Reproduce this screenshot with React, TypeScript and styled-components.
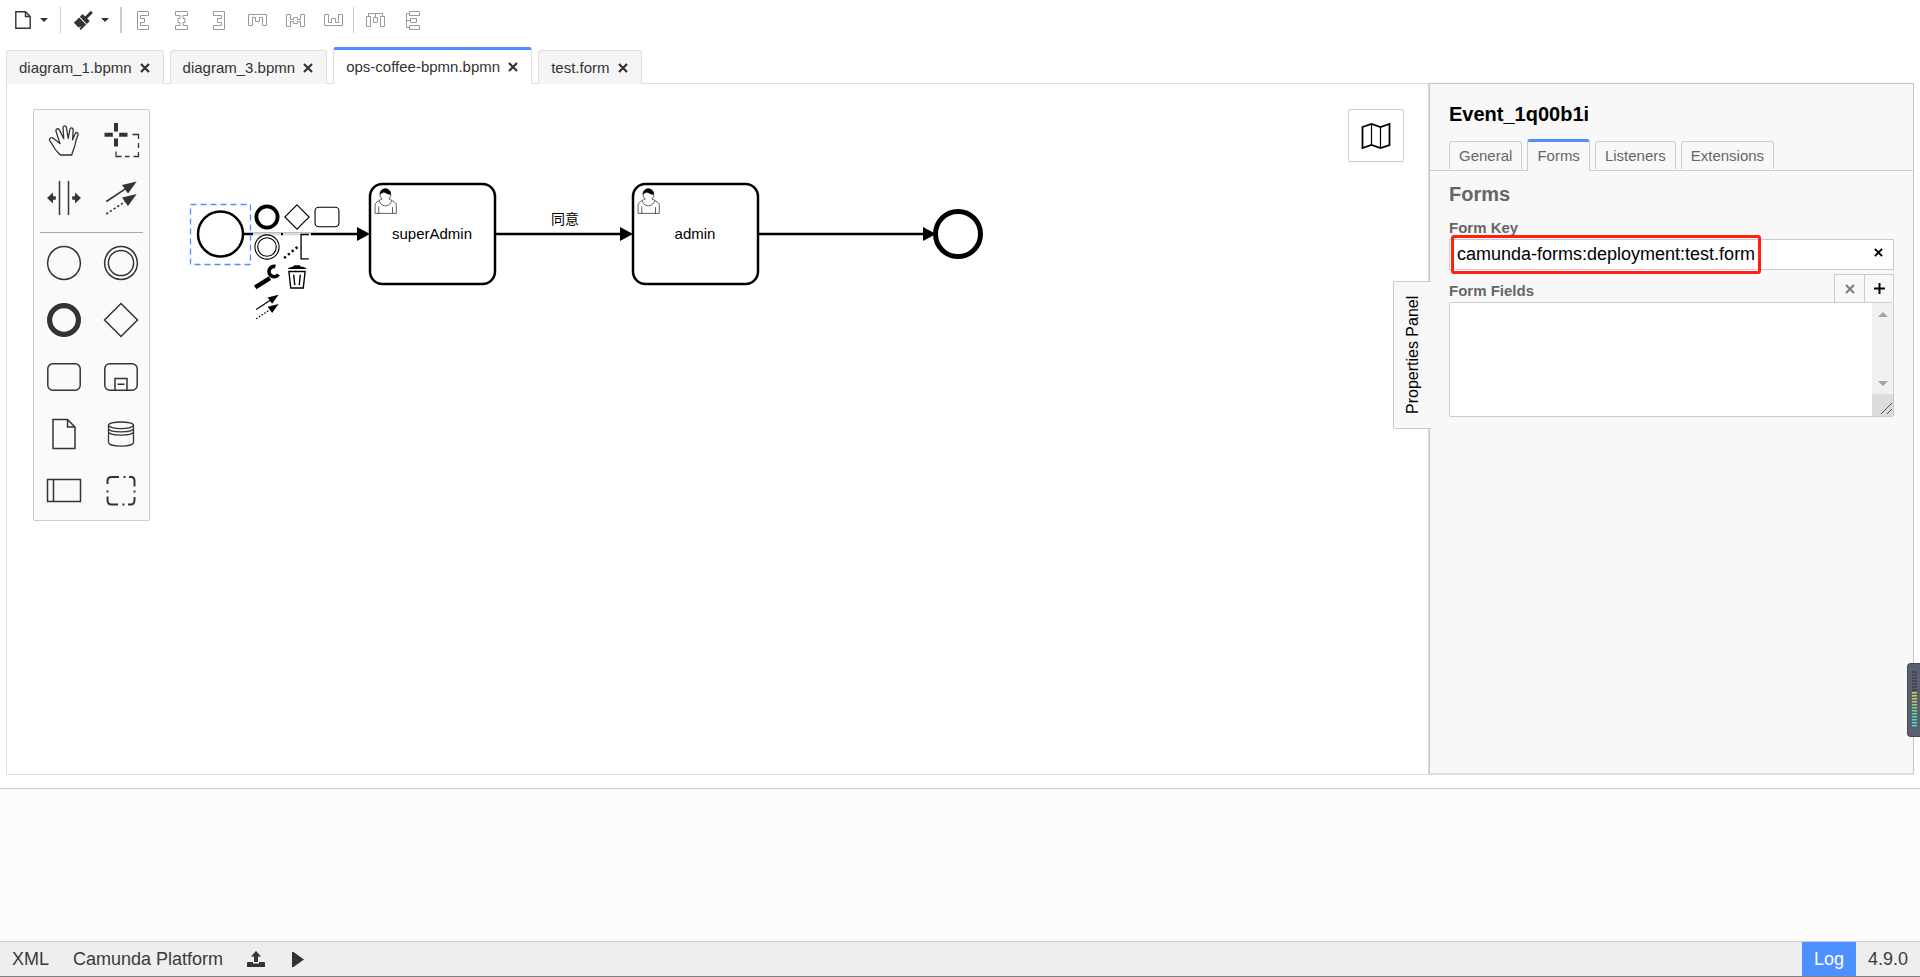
import React from "react";
import styled, { createGlobalStyle } from "styled-components";

const Global = createGlobalStyle`
  * { box-sizing: border-box; }
  body { margin: 0; background: #fff; color: #333; font-family: "Liberation Sans", Arial, sans-serif; font-size: 15px; }
  button, input, select { font: inherit; color: inherit; margin: 0; padding: 0; border: 0; background: none; outline: none; }
  svg { display: block; overflow: visible; }
`;

const Shell = styled.div`
  min-height: 100vh;
  display: flex;
  flex-direction: column;
`;

/* ---------- toolbar ---------- */
const Toolbar = styled.header`
  height: 47px;
  display: flex;
  align-items: center;
  padding: 0 0 7px 3px;
`;
const MenuButton = styled.button`
  width: 56px;
  height: 26px;
  display: flex;
  align-items: center;
  justify-content: center;
  gap: 9px;
`;
const AlignButton = styled.button`
  width: 38px;
  height: 26px;
  display: flex;
  align-items: center;
  justify-content: center;
`;
const Divider = styled.span<{ $wide?: boolean }>`
  width: ${(p) => (p.$wide ? 2 : 1)}px;
  height: 26px;
  margin: 0 2px 0 1px;
  background: #ccc;
`;
const Caret = styled.span`
  border: 4px solid transparent;
  border-top-color: #333;
  border-bottom: 0;
`;

/* ---------- file tabs ---------- */
const Tabs = styled.nav`
  height: 37px;
  margin: 0 6px;
  display: flex;
  align-items: flex-end;
  gap: 6px;
  box-shadow: inset 0 -1px #ddd;
`;
const Tab = styled.div<{ $active?: boolean }>`
  height: ${(p) => (p.$active ? 37 : 34)}px;
  display: flex;
  align-items: center;
  gap: 8px;
  padding: 0 13px 0 12px;
  border: 1px solid #ddd;
  border-top: ${(p) => (p.$active ? "3px solid #4d90ff" : "1px solid #ddd")};
  border-bottom: 0;
  border-radius: 3px 3px 0 0;
  background: ${(p) => (p.$active ? "#fff" : "#f5f5f5")};
`;
const TabLabel = styled.button`
  line-height: 18px;
`;
const IconButton = styled.button`
  display: flex;
  align-items: center;
  justify-content: center;
`;

/* ---------- editor ---------- */
const Editor = styled.main`
  flex: 1;
  min-height: 500px;
  margin: 0 6px 13px;
  display: flex;
  border: 1px solid #ddd;
  border-top: 0;
`;
const Canvas = styled.section`
  flex: 1;
  min-width: 0;
  position: relative;
  overflow: hidden;
`;
const Palette = styled.div`
  position: absolute;
  left: 26px;
  top: 25px;
  width: 117px;
  padding-top: 2px;
  border: 1px solid #ccc;
  border-radius: 2px;
  background: #fafafa;
  color: #333;
`;
const ToolGroup = styled.div<{ $height: number }>`
  height: ${(p) => p.$height}px;
  padding-left: 1px;
  display: grid;
  grid-template-columns: 1fr 1fr;
  grid-auto-rows: 1fr;
  place-items: center;
`;
const Rule = styled.hr`
  margin: 6px 6px 1px;
  border: 0;
  border-top: 1px solid #aaa;
`;
const MapToggle = styled.button`
  position: absolute;
  right: 25px;
  top: 25px;
  width: 56px;
  height: 53px;
  display: flex;
  align-items: center;
  justify-content: center;
  border: 1px solid #ccc;
  border-radius: 2px;
  background: #fff;
  color: #000;
`;
const ContextPad = styled.div`
  position: absolute;
  left: 246px;
  top: 119px;
  display: grid;
  grid-template-columns: repeat(3, 28px);
  grid-auto-rows: 28px;
  gap: 2px;
  color: #000;
`;
const PadButton = styled.button<{ $col: number; $row: number }>`
  grid-column: ${(p) => p.$col};
  grid-row: ${(p) => p.$row};
  display: flex;
  align-items: center;
  justify-content: center;
  background: rgba(255, 255, 255, 0.85);
`;
const Diagram = styled.svg`
  font-family: "Liberation Sans", "Noto Sans CJK SC", sans-serif;
  font-size: 15px;
`;

/* ---------- properties ---------- */
const Properties = styled.aside`
  width: 485px;
  margin: -1px -1px 0 0;
  position: relative;
  border: 1px solid #c6c6c6;
  border-bottom-color: #ddd;
  background: #f8f8f8;
  box-shadow: -1px 0 1px #ddd;
  color: #666;
`;
const PanelToggle = styled.button`
  position: absolute;
  left: -37px;
  top: 197px;
  width: 38px;
  height: 148px;
  display: flex;
  align-items: center;
  justify-content: center;
  writing-mode: vertical-rl;
  transform: rotate(180deg);
  border: 1px solid #ccc;
  border-left: 0;
  border-radius: 0 2px 2px 0;
  background: #f8f8f8;
  color: #000;
  font-size: 16px;
  line-height: 20px;
`;
const ElementName = styled.h1`
  margin: 18px 19px 0;
  font-size: 20px;
  line-height: 24px;
  color: #000;
`;
const PanelTabs = styled.div`
  height: 45px;
  padding: 0 19px;
  display: flex;
  align-items: flex-end;
  gap: 5px;
  box-shadow: inset 0 -1px #ccc;
`;
const PanelTab = styled.button<{ $active?: boolean }>`
  height: ${(p) => (p.$active ? 32 : 28)}px;
  margin-bottom: ${(p) => (p.$active ? 0 : 2)}px;
  padding: ${(p) => (p.$active ? "0 9px 3px" : "0 9px")};
  border: 1px solid #ccc;
  border-top: ${(p) => (p.$active ? "3px solid #4d90ff" : "1px solid #ccc")};
  border-bottom: 0;
  border-radius: 3px 3px 0 0;
  background: #f8f8f8;
`;
const PanelBody = styled.div`
  padding: 11px 19px;
`;
const GroupTitle = styled.h2`
  margin: 0 0 13px;
  font-size: 20px;
  line-height: 24px;
`;
const FieldLabel = styled.label`
  display: block;
  margin-bottom: 2px;
  font-weight: bold;
  line-height: 18px;
`;
const KeyBox = styled.div`
  height: 31px;
  position: relative;
  display: flex;
  align-items: stretch;
  border: 1px solid #ccc;
  background: #fff;
  color: #000;
`;
const KeyInput = styled.input`
  flex: 1;
  min-width: 0;
  padding: 0 8px 0 7px;
  font-size: 18px;
`;
const ClearButton = styled(IconButton)`
  width: 29px;
  padding-bottom: 4px;
`;
const Highlight = styled.span`
  position: absolute;
  left: 1px;
  top: -5px;
  width: 310px;
  height: 39px;
  border: 3px solid #ff2010;
  border-radius: 3px;
  pointer-events: none;
`;
const FieldsHeader = styled.div`
  height: 32px;
  display: flex;
  align-items: flex-end;
  justify-content: space-between;
`;
const FieldsActions = styled.div`
  display: flex;
  border: 1px solid #ccc;
  border-bottom: 0;
`;
const SmallButton = styled(IconButton)<{ $muted?: boolean }>`
  width: 29px;
  height: 27px;
  color: ${(p) => (p.$muted ? "#808080" : "#000")};
  & + & { border-left: 1px solid #ccc; }
`;
const ListBox = styled.div`
  height: 115px;
  display: flex;
  border: 1px solid #ccc;
  border-radius: 2px;
  background: #fff;
`;
const FieldList = styled.select`
  flex: 1;
  min-width: 0;
  overflow: hidden;
`;
const Rail = styled.div`
  width: 21px;
  display: flex;
  flex-direction: column;
  align-items: center;
  justify-content: space-between;
  background: #f1f1f1;
`;
const RailArrow = styled.span<{ $down?: boolean }>`
  margin: ${(p) => (p.$down ? "auto 0 8px" : "9px 0 0")};
  border: 5px solid transparent;
  ${(p) => (p.$down ? "border-top-color: #a3a3a3; border-bottom: 0;" : "border-bottom-color: #a3a3a3; border-top: 0;")}
`;
const Grip = styled.span`
  width: 21px;
  height: 22px;
  padding: 9px 0 0 9px;
  background: #dcdcdc;
`;

/* ---------- log + status ---------- */
const Log = styled.section`
  height: 153px;
  border-top: 1px solid #ccc;
  background: #fcfcfc;
`;
const StatusBar = styled.footer`
  height: 36px;
  display: flex;
  align-items: stretch;
  border-top: 1px solid #ccc;
  border-bottom: 1px solid #808080;
  background: #eee;
  font-size: 18px;
`;
const StatusButton = styled.button<{ $active?: boolean }>`
  padding: 0 12px;
  display: flex;
  align-items: center;
  background: ${(p) => (p.$active ? "#4d90ff" : "transparent")};
  color: ${(p) => (p.$active ? "#fff" : "#3a3a3a")};
`;
const StatusLeft = styled.div`
  flex: 1;
  display: flex;
`;
const Meter = styled.div`
  position: fixed;
  right: 0;
  top: 663px;
  width: 13px;
  height: 74px;
  padding: 7px 3px 0 4px;
  display: flex;
  flex-direction: column;
  gap: 1px;
  border-radius: 4px 0 0 4px;
  border: 1px solid #454a57;
  border-right: 0;
  background: #5a6070;
`;
const MeterBar = styled.i`
  height: 2px;
  flex: none;
  border-bottom: 1px solid rgba(60, 70, 70, 0.35);
`;

/* ---------- icons, drawn on a 38 unit grid ---------- */
const shapes: Record<string, React.ReactNode> = {
  hand: (
    <path d="M15.3 33H26.7C27.6 29 29.8 25.500 30.300 21.500C30.800 18.500 32 15.500 33 12.800C33.300 10.500 31.200 9.700 30.300 11.600L27.600 17.800L28.200 8C28.200 5.500 25.500 5.300 24.900 7.500L23.200 16.300L21.400 5.500C20.800 3 17.800 3.500 18.100 6L18.700 16.700L14.400 7.900C13 5.800 10.300 7 11 9.200L15 21.600L8.200 16.300C6 14.700 3.500 16.700 4.700 18.700C6.500 21 8.200 24 10 27C11.500 29.500 14 31 15.300 33Z" strokeWidth="1.3" strokeLinejoin="round" />
  ),
  lasso: (
    <g>
      <path d="M14 1V9.500M14 16.500V24.500M2.500 12.700H10.800M17.200 12.700H25.500" strokeWidth="4" />
      <path d="M30.500 12.500H36.500V17M36.500 21V26M36.500 30V34.500H31.500M27.500 34.500H23M19.500 34.500H14V29.500" strokeWidth="1.300" />
    </g>
  ),
  space: (
    <g>
      <path d="M14.500 2V36M23.500 2V36" strokeWidth="1.500" />
      <path d="M2 19L8 13.500V17.200H10.800V20.800H8V24.500ZM36 19L30 13.500V17.200H27.200V20.800H30V24.500Z" fill="currentColor" stroke="none" />
    </g>
  ),
  connect: (
    <g>
      <path d="M4.300 22.500L26 8.200" strokeWidth="1.600" />
      <path d="M4.300 35L26 20.700" strokeWidth="1.600" strokeDasharray="2.200 2.200" />
      <path d="M34.700 2.500L20 6L26 14.500ZM34.700 15L20 18.500L26 27Z" fill="currentColor" stroke="none" />
    </g>
  ),
  start: <circle cx="19" cy="19" r="16.400" strokeWidth="1.500" />,
  intermediate: (
    <g strokeWidth="1.500">
      <circle cx="19" cy="19" r="16.400" />
      <circle cx="19" cy="19" r="12.600" />
    </g>
  ),
  end: <circle cx="19" cy="19" r="14.400" strokeWidth="5.200" />,
  gateway: <path d="M19 2.500L35.500 19L19 35.500L2.500 19Z" strokeWidth="1.500" />,
  task: <rect x="2.800" y="5.800" width="32.400" height="26.400" rx="5" strokeWidth="1.500" />,
  subprocess: (
    <g strokeWidth="1.500">
      <rect x="2.800" y="5.800" width="32.400" height="26.400" rx="5" />
      <path d="M13 32V20.500H25V32M15.500 26.300H22.500" />
    </g>
  ),
  data: <path d="M8 4.500H22.500L30 12V33.500H8ZM22.500 4.500V12H30" strokeWidth="1.500" />,
  store: (
    <g strokeWidth="1.300">
      <ellipse cx="19" cy="10.300" rx="12.500" ry="3.300" />
      <path d="M6.500 10.300V27.500C6.500 32.200 31.500 32.200 31.500 27.500V10.300M6.500 13.500C6.500 18 31.500 18 31.500 13.500M6.500 16.800C6.500 21.300 31.500 21.300 31.500 16.800" />
    </g>
  ),
  participant: <path d="M2.500 7.500H35.500V29.500H2.500ZM8.500 7.500V29.500" strokeWidth="1.500" />,
  group: (
    <path d="M5.500 12V9Q5.500 5 9.500 5H17M21.500 5H23.500M27 5H29Q32.500 5 32.500 9V14.500M32.500 18.500V20.500M32.500 25V28Q32.500 32.500 28.500 32.500H26M22.500 32.500H20.500M16 32.500H9.500Q5.500 32.500 5.500 28V24.500M5.500 20.500V18.500" strokeWidth="2" />
  ),
  annotation: (
    <g>
      <path d="M35 2H24.500V35H35" strokeWidth="1.800" />
      <path d="M1.500 34L22 17" strokeWidth="3.400" strokeDasharray="3 3.800" />
    </g>
  ),
  wrench: (
    <g>
      <path d="M3 33L23 20.500" strokeWidth="6" />
      <path d="M34.500 15.500A7 7 0 1 1 30.500 4.800" strokeWidth="5" />
    </g>
  ),
  trash: (
    <g>
      <path d="M6 8C9 5.500 12 5 13.500 5L15.500 3H22.500L24.500 5C27 5 30 5.500 32 8Z" fill="currentColor" stroke="none" />
      <path d="M8 11.500H30L27.500 34H10.500ZM14.500 16L16 30M23.500 16L22 30" strokeWidth="1.900" />
    </g>
  ),
};

function Shape({ name, size = 38 }: { name: string; size?: number }) {
  return (
    <svg width={size} height={size} viewBox="0 0 38 38" fill="none" stroke="currentColor" aria-hidden="true">
      {shapes[name]}
    </svg>
  );
}

function Tool({ name }: { name: string }) {
  return (
    <IconButton aria-label={name}>
      <Shape name={name} />
    </IconButton>
  );
}

const Cross = ({ size = 10 }: { size?: number }) => (
  <svg width={size} height={size} viewBox="0 0 10 10" stroke="currentColor" strokeWidth="2.200" aria-hidden="true">
    <path d="M1 1L9 9M9 1L1 9" />
  </svg>
);

const alignIcons: [string, number, number, string][] = [
  ["Align left", 12, 19, "M.5.5H11.500V4.500H3.500V7.500H7.500V11.500H3.500V14.500H11.500V18.500H.5Z"],
  ["Align center", 13, 19, "M.5.5H12.500V4.500H8V7.500H10V11.500H8V14.500H12.500V18.500H.5V14.500H5V11.500H3V7.500H5V4.500H.5Z"],
  ["Align right", 12, 19, "M11.500.5H.5V4.500H8.500V7.500H4.500V11.500H8.500V14.500H.5V18.500H11.500Z"],
  ["Align top", 19, 12, "M.5.5H18.500V11.500H14.500V3.500H11.500V7.500H7.500V3.500H4.500V11.500H.5Z"],
  ["Align middle", 19, 13, "M.5.5H4.500V5.500H7.500V3.500H11.500V5.500H14.500V.5H18.500V12.500H14.500V7.500H11.500V9.500H7.500V7.500H4.500V12.500H.5Z"],
  ["Align bottom", 19, 12, "M.5.5H4.500V8.500H7.500V4.500H11.500V8.500H14.500V.5H18.500V11.500H.5Z"],
  ["Distribute horizontally", 19, 14, "M.5 13.500V3.500H4.500V13.500ZM14.500 13.500V3.500H18.500V13.500ZM7.500 4.500H11.500V9.500H7.500ZM2.500 3.500V.5H16.500V3.500M9.500 .5V4.500"],
  ["Distribute vertically", 14, 19, "M3.500.5H13.500V4.500H3.500ZM3.500 14.500H13.500V18.500H3.500ZM4.500 7.500H10.500V11.500H4.500ZM3.500 2.500H.5V16.500H3.500M.5 9.500H4.500"],
];

function AlignTool({ index }: { index: number }) {
  const [label, w, h, d] = alignIcons[index];
  return (
    <AlignButton aria-label={label}>
      <svg width={w} height={h} fill="none" stroke="#999" strokeWidth="1">
        <path d={d} />
      </svg>
    </AlignButton>
  );
}

function UserTask({ x, y, name }: { x: number; y: number; name: string }) {
  return (
    <g transform={`translate(${x} ${y})`}>
      <rect width="125" height="100" rx="12.500" fill="#fff" stroke="#000" strokeWidth="2.500" />
      <g transform="scale(1.25)" stroke="#000" strokeWidth=".5" fill="#fff">
        <path d="m 15,12 c 0.909,-0.845 1.594,-2.049 1.594,-3.385 0,-2.554 -1.805,-4.622 -4.357,-4.622 -2.552,0 -4.288,2.068 -4.288,4.622 0,1.348 0.974,2.562 1.896,3.405 -0.529,0.187 -5.669,2.097 -5.794,4.756 v 6.718 h 17 v -6.718 c 0,-2.298 -5.528,-4.595 -6.051,-4.776z m -8,6 l 0,5.500 m 11,0 l 0,-5" />
        <path d="m 15,12 m 2.162,1.009 c 0,2.447 -2.158,4.431 -4.821,4.431 -2.665,0 -4.822,-1.981 -4.822,-4.431" />
        <path d="m 15,12 m -6.900,-3.800 c 0,0 2.251,-2.358 4.274,-1.177 2.024,1.181 4.221,1.537 4.124,0.965 -0.098,-0.570 -0.117,-3.791 -4.191,-4.136 -3.572,0 -4.208,3.367 -4.207,4.348z" fill="#000" />
      </g>
      <text x="62" y="55" textAnchor="middle">{name}</text>
    </g>
  );
}

function Flow({ from, to }: { from: number; to: number }) {
  return (
    <g>
      <path d={`M${from} 150H${to - 10}`} stroke="#000" strokeWidth="2.500" />
      <path d={`M${to} 150L${to - 13} 143V157Z`} />
    </g>
  );
}

const pad: [string, number, number][] = [
  ["end", 1, 1],
  ["gateway", 2, 1],
  ["task", 3, 1],
  ["intermediate", 1, 2],
  ["annotation", 2, 2],
  ["wrench", 1, 3],
  ["trash", 2, 3],
  ["connect", 1, 4],
];

const files = ["diagram_1.bpmn", "diagram_3.bpmn", "ops-coffee-bpmn.bpmn", "test.form"];
const meterColors = [
  ...Array(7).fill("#474b57"),
  "#d8c64a", "#d3cc50", "#c3cf58", "#aed160", "#97d36e", "#85d482", "#72d498", "#62d4a8", "#56d6b6", "#50d8c0", "#4edac6", "#4edac6",
];

export default function App() {
  return (
    <Shell>
      <Global />
      <Toolbar>
        <MenuButton aria-label="New file">
          <svg width="16" height="18" fill="none" stroke="#333" strokeWidth="1.400">
            <path d="M.8.8H10.500L15.200 5.500V17.200H.8ZM10.500.8V5.500H15.200" />
          </svg>
          <Caret />
        </MenuButton>
        <Divider />
        <MenuButton aria-label="Set color">
          <svg width="18" height="18" fill="#333">
            <g transform="rotate(45 9 9)">
              <path d="M8-3H11V5H14.500V9H4.500V5H8ZM4.500 10H14.500V17.500H12.500V15.500H11.500V17.500H4.500Z" />
            </g>
          </svg>
          <Caret />
        </MenuButton>
        <Divider $wide />
        {[0, 1, 2, 3, 4, 5].map((i) => <AlignTool key={i} index={i} />)}
        <Divider />
        {[6, 7].map((i) => <AlignTool key={i} index={i} />)}
      </Toolbar>

      <Tabs>
        {files.map((f, i) => (
          <Tab key={f} $active={i === 2}>
            <TabLabel>{f}</TabLabel>
            <IconButton aria-label={`Close ${f}`}><Cross /></IconButton>
          </Tab>
        ))}
      </Tabs>

      <Editor>
        <Canvas>
          <Diagram width="1000" height="300">
            <Flow from={237} to={363} />
            <Flow from={489} to={626} />
            <Flow from={752} to={929} />
            <circle cx="213.500" cy="150" r="22.500" fill="#fff" stroke="#000" strokeWidth="2.500" />
            <rect x="183.500" y="120.500" width="60" height="60" fill="none" stroke="#4d90ff" strokeDasharray="6 4" strokeWidth="1.300" />
            <UserTask x={363} y={100} name="superAdmin" />
            <UserTask x={626} y={100} name="admin" />
            <circle cx="951" cy="150" r="22.500" fill="#fff" stroke="#000" strokeWidth="5" />
            <text x="558" y="140" fontSize="14" textAnchor="middle">同意</text>
          </Diagram>
          <ContextPad>
            {pad.map(([name, col, row]) => (
              <PadButton key={name} $col={col} $row={row} aria-label={name}>
                <Shape name={name} size={28} />
              </PadButton>
            ))}
          </ContextPad>
          <Palette>
            <ToolGroup $height={114}>
              {["hand", "lasso", "space", "connect"].map((n) => <Tool key={n} name={n} />)}
            </ToolGroup>
            <Rule />
            <ToolGroup $height={286}>
              {["start", "intermediate", "end", "gateway", "task", "subprocess", "data", "store", "participant", "group"].map((n) => (
                <Tool key={n} name={n} />
              ))}
            </ToolGroup>
          </Palette>
          <MapToggle aria-label="Toggle minimap">
            <svg width="30" height="26" fill="none" stroke="currentColor" strokeWidth="1.800">
              <path d="M1.500 4L10.500 1L19.500 4L28.500 1V22L19.500 25L10.500 22L1.500 25Z" />
              <path d="M10.500 1V22M19.500 4V25" strokeWidth="1.200" />
            </svg>
          </MapToggle>
        </Canvas>

        <Properties>
          <PanelToggle>Properties Panel</PanelToggle>
          <ElementName>Event_1q00b1i</ElementName>
          <PanelTabs>
            {["General", "Forms", "Listeners", "Extensions"].map((t) => (
              <PanelTab key={t} $active={t === "Forms"}>{t}</PanelTab>
            ))}
          </PanelTabs>
          <PanelBody>
            <GroupTitle>Forms</GroupTitle>
            <FieldLabel htmlFor="form-key">Form Key</FieldLabel>
            <KeyBox>
              <KeyInput id="form-key" defaultValue="camunda-forms:deployment:test.form" />
              <ClearButton aria-label="Clear"><Cross size={9} /></ClearButton>
              <Highlight />
            </KeyBox>
            <FieldsHeader>
              <FieldLabel htmlFor="form-fields">Form Fields</FieldLabel>
              <FieldsActions>
                <SmallButton $muted aria-label="Remove field"><Cross size={10} /></SmallButton>
                <SmallButton aria-label="Add field">
                  <svg width="11" height="11" stroke="currentColor" strokeWidth="2"><path d="M5.500 0V11M0 5.500H11" /></svg>
                </SmallButton>
              </FieldsActions>
            </FieldsHeader>
            <ListBox>
              <FieldList id="form-fields" size={5} />
              <Rail>
                <RailArrow />
                <RailArrow $down />
                <Grip>
                  <svg width="11" height="11" stroke="#555" strokeWidth="1"><path d="M0 11L11 0M6 11L11 6" /></svg>
                </Grip>
              </Rail>
            </ListBox>
          </PanelBody>
        </Properties>
      </Editor>

      <Log aria-label="Log" />
      <StatusBar>
        <StatusLeft>
          <StatusButton>XML</StatusButton>
          <StatusButton>Camunda Platform</StatusButton>
          <StatusButton aria-label="Deploy">
            <svg width="18" height="16" fill="#333">
              <path d="M9 0L14 5.500H11V11H7V5.500H4ZM1 11H6V12.500H12V11H17Q18 11 18 12V16H0V12Q0 11 1 11Z" />
            </svg>
          </StatusButton>
          <StatusButton aria-label="Run">
            <svg width="16" height="15" fill="#333"><path d="M3 0H4.500L15 7.500L4.500 15H3Z" /></svg>
          </StatusButton>
        </StatusLeft>
        <StatusButton $active>Log</StatusButton>
        <StatusButton>4.9.0</StatusButton>
      </StatusBar>
      <Meter>
        {meterColors.map((c, i) => <MeterBar key={i} style={{ background: c }} />)}
      </Meter>
    </Shell>
  );
}
